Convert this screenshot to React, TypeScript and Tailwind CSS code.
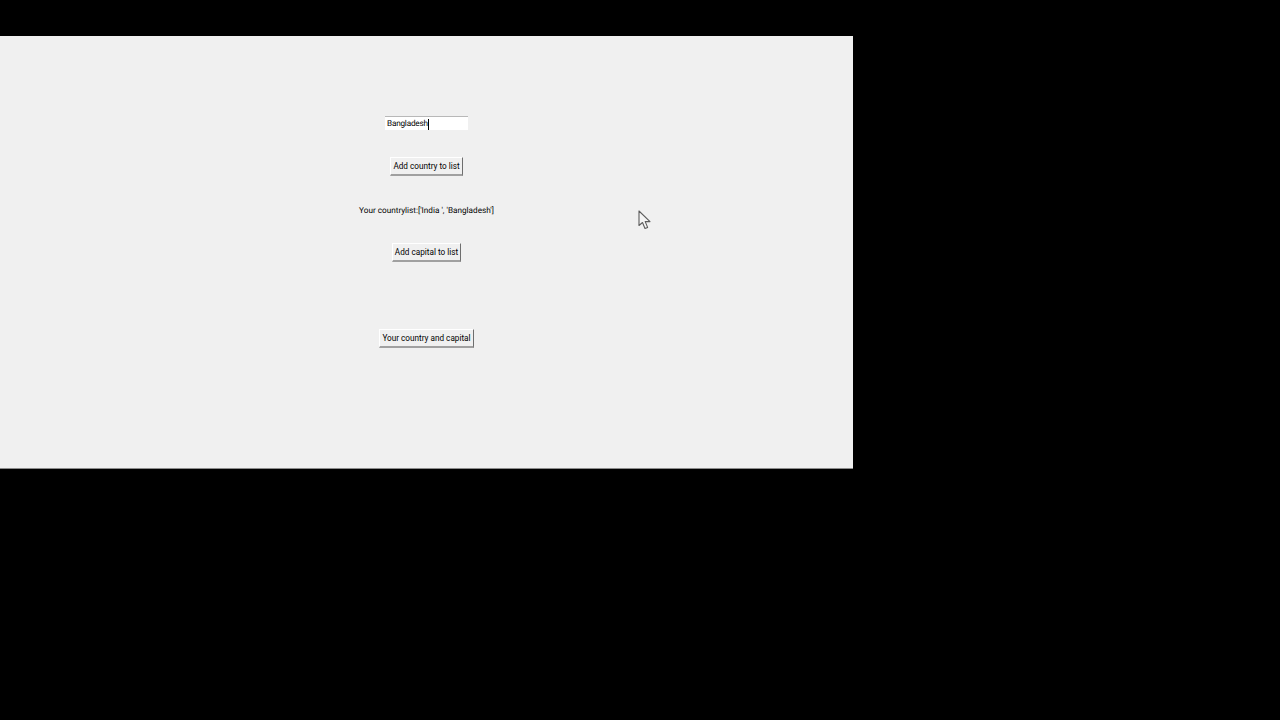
const TkButton = ({ label }: { label: string }) => (
  <button className="h-[19px] px-[2px] pt-px bg-[#f0f0f0] text-black text-[8.2px] leading-none border-t border-l border-t-white border-l-white border-r border-b-2 border-r-[#6e6e6e] border-b-[#a0a0a0]">
    {label}
  </button>
);

const App = () => {
  return (
    <div className="h-[720px] bg-black pt-[36px] font-['Roboto','Liberation_Sans',Arial,sans-serif] [text-rendering:geometricPrecision]">
      <div className="relative flex h-[433px] w-[853px] flex-col items-center bg-[#f0f0f0] border-b border-b-[#8c8c8c]">
        <div className="mt-[80px] flex h-[14px] w-[83px] items-center border-t border-t-[#b8b8b8] bg-white pl-[2px] pt-px text-[8.2px] tracking-[-0.2px] text-black">
          Bangladesh
          <span className="h-[11px] w-[1.5px] bg-black" />
        </div>

        <div className="mt-[27px] flex">
          <TkButton label="Add country to list" />
        </div>

        <div className="mt-[28px] text-[8.2px] leading-[14px] text-black">
          Your countrylist:['India ', 'Bangladesh']
        </div>

        <div className="mt-[25px] flex">
          <TkButton label="Add capital to list" />
        </div>

        <div className="mt-[67px] flex">
          <TkButton label="Your country and capital" />
        </div>

        {/* mouse pointer from the screen recording */}
        <svg className="absolute left-[638px] top-[174px]" width="14" height="20" viewBox="0 0 14 20">
          <path
            d="M1 1 L1 15.5 L4.5 12.5 L7 18.5 L9.6 17.4 L7.2 11.6 L12 11.6 Z"
            fill="#f4f4f4"
            stroke="#5c5c5c"
            strokeWidth="1.1"
            strokeLinejoin="round"
          />
        </svg>
      </div>
    </div>
  );
};

export default App;
